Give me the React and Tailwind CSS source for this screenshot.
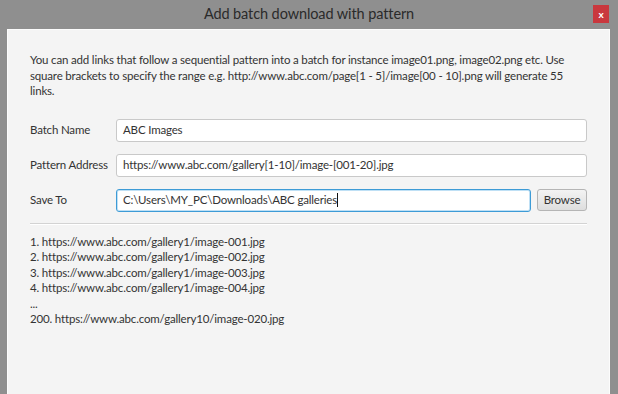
export default function App() {
  const links = [
    '1. https://www.abc.com/gallery1/image-001.jpg',
    '2. https://www.abc.com/gallery1/image-002.jpg',
    '3. https://www.abc.com/gallery1/image-003.jpg',
    '4. https://www.abc.com/gallery1/image-004.jpg',
    '...',
    '200. https://www.abc.com/gallery10/image-020.jpg',
  ]

  return (
    <div className="w-[618px] h-[394px] bg-[#8f8f8f] flex flex-col overflow-hidden text-[#333] font-['Lato',sans-serif]">
      <div className="h-[29px] shrink-0 relative flex items-center justify-center">
        <span className="text-[14.5px] tracking-[-0.1px] text-[#2a2a2a] leading-none">Add batch download with pattern</span>
        <div className="absolute right-[9px] top-[5px] w-[16px] h-[18px] bg-[#c9383e] flex items-center justify-center text-white text-[10px] font-bold leading-none">x</div>
      </div>

      <div className="flex-1 ml-[7px] mr-[8px] bg-[#f4f4f4] border-l border-t border-r border-[#fcfcfc] px-[22px] pt-[22px] text-[11.5px] tracking-[-0.17px]">
        <p className="leading-[15.5px] whitespace-nowrap">
          You can add links that follow a sequential pattern into a batch for instance image01.png, image02.png etc. Use<br />
          square brackets to specify the range e.g. http://www.abc.com/page[1 - 5]/image[00 - 10].png will generate 55<br />
          links.
        </p>

        <div className="mt-[20px] flex flex-col gap-[12px]">
          <div className="flex items-center h-[23px]">
            <label className="w-[86px] shrink-0 whitespace-nowrap">Batch Name</label>
            <div className="flex-1 h-full bg-white border border-[#c9c9c9] rounded-[3px] px-[6px] flex items-center">ABC Images</div>
          </div>
          <div className="flex items-center h-[23px]">
            <label className="w-[86px] shrink-0 whitespace-nowrap">Pattern Address</label>
            <div className="flex-1 h-full bg-white border border-[#c9c9c9] rounded-[3px] px-[6px] flex items-center">https://www.abc.com/gallery[1-10]/image-[001-20].jpg</div>
          </div>
          <div className="flex items-center h-[23px]">
            <label className="w-[86px] shrink-0 whitespace-nowrap">Save To</label>
            <div className="flex-1 h-full bg-white border border-[#3d9bd6] rounded-[3px] px-[6px] flex items-center shadow-[inset_0_0_0_1px_#bfe0f5]">
              C:\Users\MY_PC\Downloads\ABC galleries<span className="inline-block w-px h-[14px] bg-[#111]"></span>
            </div>
            <button className="ml-[6px] w-[50px] h-[22px] border border-[#b5b5b5] rounded-[3px] bg-gradient-to-b from-[#f3f3f3] to-[#dedede] text-[#333] text-[11.5px] leading-none">Browse</button>
          </div>
        </div>

        <div className="mt-[11px] h-[2px] border-t border-[#d3d3d3] border-b border-b-white"></div>

        <div className="mt-[9px] leading-[15.6px]">
          {links.map((l, i) => (
            <div key={i}>{l}</div>
          ))}
        </div>
      </div>
    </div>
  )
}
